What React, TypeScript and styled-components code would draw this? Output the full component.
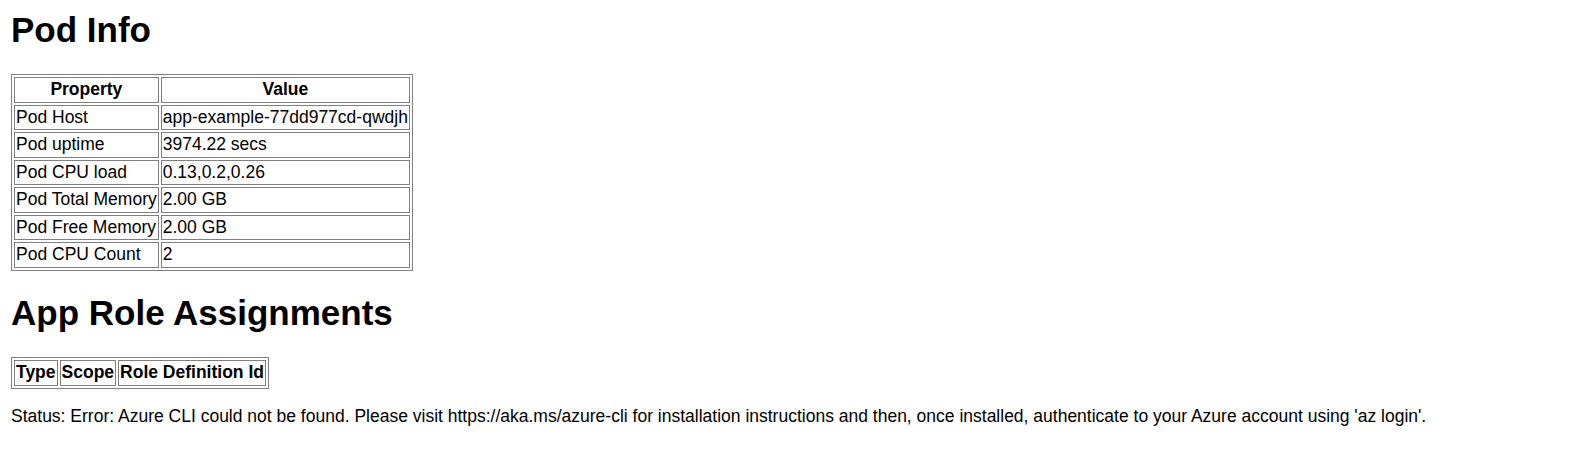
import React from "react";
import styled, { createGlobalStyle } from "styled-components";

const Global = createGlobalStyle`
  body {
    margin: 10px 11px;
    font-family: "Liberation Sans", Arial, sans-serif;
    font-size: 17.5px;
    line-height: 21.5px;
    color: #000;
    background: #fff;
  }
`;

const Heading = styled.h1<{ $first?: boolean }>`
  font-size: 35px;
  line-height: 40px;
  font-weight: bold;
  margin: ${(p) => (p.$first ? "0" : "22.5px")} 0 24px;
`;

const Table = styled.table`
  border: 1px solid #808080;
  border-spacing: 2px;
  border-collapse: separate;
  font-size: 17.5px;
  line-height: 21.5px;
`;

const Th = styled.th`
  border: 1px solid #808080;
  padding: 1px;
  font-weight: bold;
  text-align: center;
`;

const Td = styled.td`
  border: 1px solid #808080;
  padding: 1px;
`;

const Status = styled.p`
  margin: 17px 0;
`;

const rows: [string, string][] = [
  ["Pod Host", "app-example-77dd977cd-qwdjh"],
  ["Pod uptime", "3974.22 secs"],
  ["Pod CPU load", "0.13,0.2,0.26"],
  ["Pod Total Memory", "2.00 GB"],
  ["Pod Free Memory", "2.00 GB"],
  ["Pod CPU Count", "2"],
];

export default function App() {
  return (
    <>
      <Global />
      <Heading $first>Pod Info</Heading>
      <Table>
        <tbody>
          <tr>
            <Th>Property</Th>
            <Th>Value</Th>
          </tr>
          {rows.map(([k, v]) => (
            <tr key={k}>
              <Td>{k}</Td>
              <Td>{v}</Td>
            </tr>
          ))}
        </tbody>
      </Table>
      <Heading>App Role Assignments</Heading>
      <Table>
        <tbody>
          <tr>
            <Th>Type</Th>
            <Th>Scope</Th>
            <Th>Role Definition Id</Th>
          </tr>
        </tbody>
      </Table>
      <Status>
        Status: Error: Azure CLI could not be found. Please visit https://aka.ms/azure-cli for installation
        instructions and then, once installed, authenticate to your Azure account using 'az login'.
      </Status>
    </>
  );
}
